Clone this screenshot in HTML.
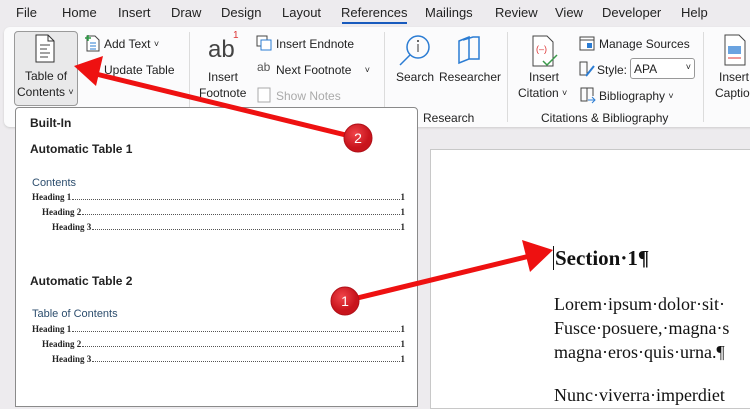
<!DOCTYPE html>
<html><head><meta charset="utf-8"><style>
*{margin:0;padding:0;box-sizing:border-box}
body{width:750px;height:400px;overflow:hidden;background:#edebee;font-family:"Liberation Sans",sans-serif;position:relative;color:#222}
.a{position:absolute;white-space:nowrap}
.tab{font-size:13px;top:5px;color:#222}
.rb{position:absolute;left:4px;top:27px;width:760px;height:100px;background:#fbfbfc;border-radius:6px;box-shadow:0 1px 2px #ccc}
.sm{font-size:12px;color:#222}
.cv{font-size:9px;vertical-align:1px}
.sep{position:absolute;width:1px;background:#dcdcdc;top:32px;height:90px}
.drop{position:absolute;left:15px;top:107px;width:403px;height:300px;background:#fff;border:1px solid #8a8a8a;border-radius:4px 4px 0 0}
.hd{font-size:12px;font-weight:bold;color:#222}
.ct{font-size:11px;color:#2d4e6e}
.toc{position:absolute;font-family:"Liberation Serif",serif;font-size:9px;font-weight:bold;display:flex;align-items:flex-end}
.toc span.d{flex:1;border-bottom:1px dotted #555;margin:0 1px 2px}
.page{position:absolute;left:430px;top:149px;width:340px;height:260px;background:#fff;border:1px solid #c8c8c8}
.ser{font-family:"Liberation Serif",serif;font-size:18px;color:#111}
</style></head><body>
<div class="a tab" style="left:16px">File</div>
<div class="a tab" style="left:62px">Home</div>
<div class="a tab" style="left:118px">Insert</div>
<div class="a tab" style="left:171px">Draw</div>
<div class="a tab" style="left:221px">Design</div>
<div class="a tab" style="left:282px">Layout</div>
<div class="a tab" style="left:341px">References</div>
<div style="position:absolute;left:342px;top:22px;width:65px;height:2px;background:#185abd"></div>
<div class="a tab" style="left:425px">Mailings</div>
<div class="a tab" style="left:495px">Review</div>
<div class="a tab" style="left:555px">View</div>
<div class="a tab" style="left:602px">Developer</div>
<div class="a tab" style="left:681px">Help</div>

<div class="rb"></div>
<div style="position:absolute;left:14px;top:31px;width:64px;height:75px;background:#e9e9ea;border:1px solid #9a9a9a;border-radius:4px"></div>
<svg class="a" style="left:34px;top:34px" width="22" height="30"><path d="M2 1h12l6 6v21H2z" fill="#fff" stroke="#333"/><path d="M14 1v6h6" fill="none" stroke="#333"/><path d="M6 11h10M6 15h7M6 19h10M6 23h8" stroke="#444"/></svg>
<div class="a sm" style="left:25px;top:69px">Table of</div>
<div class="a sm" style="left:17px;top:85px">Contents <span class="cv">˅</span></div>
<svg class="a" style="left:84px;top:34px" width="16" height="18"><path d="M3 2h8l4 4v11H3z" fill="#fff" stroke="#444"/><path d="M6 9h6M6 12h6M6 15h6" stroke="#2b7cd3"/><path d="M1 4h6M4 1v6" stroke="#2e9d46" stroke-width="1.5"/></svg>
<div class="a sm" style="left:104px;top:37px">Add Text <span class="cv">˅</span></div>
<svg class="a" style="left:84px;top:61px" width="16" height="16"><rect x="2" y="2" width="12" height="12" fill="#fff" stroke="#444"/></svg>
<div class="a sm" style="left:104px;top:63px">Update Table</div>
<div class="sep" style="left:189px"></div>
<div class="a" style="left:208px;top:36px;font-size:24px;color:#444">ab</div>
<div class="a" style="left:233px;top:30px;font-size:10px;color:#d33">1</div>
<div class="a sm" style="left:208px;top:70px">Insert</div>
<div class="a sm" style="left:199px;top:86px">Footnote</div>
<svg class="a" style="left:256px;top:35px" width="16" height="16"><rect x="1" y="1" width="10" height="10" fill="#fff" stroke="#444"/><rect x="5" y="5" width="10" height="10" fill="#fff" stroke="#2b7cd3"/></svg>
<div class="a sm" style="left:276px;top:37px">Insert Endnote</div>
<div class="a" style="left:257px;top:60px;font-size:12px;color:#555">ab</div>
<div class="a sm" style="left:276px;top:63px">Next Footnote &nbsp;&nbsp;&nbsp;<span class="cv">˅</span></div>
<svg class="a" style="left:257px;top:87px" width="14" height="16"><rect x="1" y="1" width="12" height="14" fill="#fff" stroke="#aaa"/></svg>
<div class="a sm" style="left:276px;top:89px;color:#aaa">Show Notes</div>
<div class="sep" style="left:384px"></div>
<svg class="a" style="left:398px;top:34px" width="34" height="32"><circle cx="20" cy="13" r="11" fill="none" stroke="#2b7cd3" stroke-width="1.5"/><path d="M12 21L2 31" stroke="#2b7cd3" stroke-width="1.5"/><path d="M20 10v8" stroke="#333"/><circle cx="20" cy="7" r="1" fill="#333"/></svg>
<div class="a sm" style="left:396px;top:70px">Search</div>
<svg class="a" style="left:455px;top:35px" width="28" height="30"><path d="M4 6l10-4v22l-10 4z M8 5l10-3h6v22H14" fill="none" stroke="#2b7cd3" stroke-width="1.5"/></svg>
<div class="a sm" style="left:439px;top:70px">Researcher</div>
<div class="a sm" style="left:423px;top:111px">Research</div>
<div class="sep" style="left:507px"></div>
<svg class="a" style="left:531px;top:35px" width="30" height="32"><path d="M2 1h14l6 6v24H2z" fill="#fff" stroke="#444"/><text x="5" y="17" font-size="9" fill="#d33" font-family="Liberation Sans">(–)</text><path d="M12 26l4 4 10-10" fill="none" stroke="#3a9a4a" stroke-width="1.5"/></svg>
<div class="a sm" style="left:529px;top:70px">Insert</div>
<div class="a sm" style="left:518px;top:86px">Citation <span class="cv">˅</span></div>
<svg class="a" style="left:579px;top:36px" width="16" height="16"><rect x="1" y="1" width="14" height="13" fill="#fff" stroke="#444"/><path d="M1 4h14" stroke="#444"/><rect x="8" y="7" width="5" height="5" fill="#2b7cd3"/></svg>
<div class="a sm" style="left:599px;top:37px">Manage Sources</div>
<svg class="a" style="left:578px;top:60px" width="18" height="18"><path d="M2 2h7v13H2z" fill="none" stroke="#444"/><path d="M8 16l8-10" stroke="#2b7cd3" stroke-width="2"/></svg>
<div class="a sm" style="left:597px;top:63px">Style:</div>
<div style="position:absolute;left:630px;top:58px;width:65px;height:21px;border:1px solid #999;border-radius:3px;background:#fff;font-size:12px;padding:3px 3px">APA<span style="float:right;font-size:9px">˅</span></div>
<svg class="a" style="left:579px;top:86px" width="18" height="18"><path d="M2 2h6v13H2zM8 2h6v8" fill="none" stroke="#444"/><path d="M9 14h7M13 11l3 3-3 3" fill="none" stroke="#2b7cd3"/></svg>
<div class="a sm" style="left:599px;top:89px">Bibliography <span class="cv">˅</span></div>
<div class="a sm" style="left:541px;top:111px">Citations &amp; Bibliography</div>
<div class="sep" style="left:703px"></div>
<svg class="a" style="left:723px;top:34px" width="27" height="32"><path d="M2 1h14l6 6v24H2z" fill="#fff" stroke="#444"/><rect x="5" y="12" width="13" height="8" fill="#2b7cd3" opacity=".7"/><path d="M5 24h13" stroke="#d33"/></svg>
<div class="a sm" style="left:719px;top:70px">Insert</div>
<div class="a sm" style="left:715px;top:86px">Caption</div>

<div class="page"></div>
<div class="a ser" style="left:555px;top:246px;font-size:21px;font-weight:bold">Section·1¶</div>
<div style="position:absolute;left:553px;top:246px;width:1px;height:24px;background:#111"></div>
<div class="a ser" style="left:554px;top:294px">Lorem·ipsum·dolor·sit·</div>
<div class="a ser" style="left:554px;top:318px">Fusce·posuere,·magna·s</div>
<div class="a ser" style="left:554px;top:342px">magna·eros·quis·urna.¶</div>
<div class="a ser" style="left:554px;top:385px">Nunc·viverra·imperdiet</div>

<div class="drop"></div>
<div class="a hd" style="left:30px;top:116px">Built-In</div>
<div class="a hd" style="left:30px;top:142px">Automatic Table 1</div>
<div class="a ct" style="left:32px;top:177px">Contents</div>
<div class="toc" style="left:32px;top:192px;width:373px">Heading 1<span class="d"></span>1</div>
<div class="toc" style="left:42px;top:207px;width:363px">Heading 2<span class="d"></span>1</div>
<div class="toc" style="left:52px;top:222px;width:353px">Heading 3<span class="d"></span>1</div>
<div class="a hd" style="left:30px;top:274px">Automatic Table 2</div>
<div class="a ct" style="left:32px;top:308px">Table of Contents</div>
<div class="toc" style="left:32px;top:324px;width:373px">Heading 1<span class="d"></span>1</div>
<div class="toc" style="left:42px;top:339px;width:363px">Heading 2<span class="d"></span>1</div>
<div class="toc" style="left:52px;top:354px;width:353px">Heading 3<span class="d"></span>1</div>

<svg class="a" style="left:0;top:0" width="750" height="400">
<defs><radialGradient id="g" cx="40%" cy="35%"><stop offset="0" stop-color="#f0444a"/><stop offset="1" stop-color="#c8141c"/></radialGradient></defs>
<path d="M358 138L96 74" stroke="#ee1111" stroke-width="5"/>
<path d="M74 66L103 56L96 86z" fill="#ee1111"/>
<path d="M345 301L530 256" stroke="#ee1111" stroke-width="5"/>
<path d="M553 250L522 240L530 272z" fill="#ee1111"/>
<circle cx="358" cy="138" r="14" fill="url(#g)" stroke="#b01018"/>
<text x="358" y="143" font-size="14" fill="#fff" text-anchor="middle" font-family="Liberation Sans">2</text>
<circle cx="345" cy="301" r="14" fill="url(#g)" stroke="#b01018"/>
<text x="345" y="306" font-size="14" fill="#fff" text-anchor="middle" font-family="Liberation Sans">1</text>
</svg>
</body></html>
